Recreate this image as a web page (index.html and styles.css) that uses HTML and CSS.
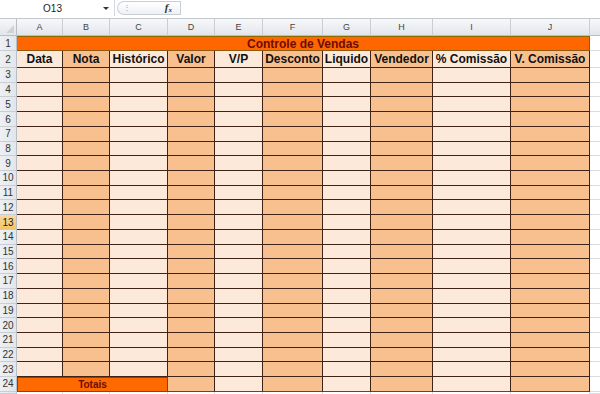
FILE: index.html
```html
<!DOCTYPE html>
<html>
<head>
<meta charset="utf-8">
<link rel="stylesheet" href="styles.css">
</head>
<body>
<div class="fbar">
  <div class="namebox"><span class="ref">O13</span><span class="arrow"></span></div>
  <div class="pill"><span class="dots">⋮</span><span class="fx"><i>f</i><sub>x</sub></span></div>
  <div class="input"></div>
</div>
<div class="sheet">
  <div class="corner"><span class="tri"></span></div>
  <div class="ch">A</div><div class="ch">B</div><div class="ch">C</div><div class="ch">D</div><div class="ch">E</div><div class="ch">F</div><div class="ch">G</div><div class="ch">H</div><div class="ch">I</div><div class="ch">J</div><div class="ch last"></div>

  <div class="rh">1</div><div class="title">Controle de Vendas</div><div class="x"></div>

  <div class="rh r2">2</div>
  <div class="c l hd">Data</div><div class="c d hd">Nota</div><div class="c l hd">Histórico</div><div class="c d hd">Valor</div><div class="c l hd">V/P</div><div class="c d hd">Desconto</div><div class="c l hd">Liquido</div><div class="c d hd">Vendedor</div><div class="c l hd">% Comissão</div><div class="c d hd">V. Comissão</div><div class="x"></div>

  <div class="rh">3</div><div class="c l"></div><div class="c d"></div><div class="c l"></div><div class="c d"></div><div class="c l"></div><div class="c d"></div><div class="c l"></div><div class="c d"></div><div class="c l"></div><div class="c d"></div><div class="x"></div>
  <div class="rh">4</div><div class="c l"></div><div class="c d"></div><div class="c l"></div><div class="c d"></div><div class="c l"></div><div class="c d"></div><div class="c l"></div><div class="c d"></div><div class="c l"></div><div class="c d"></div><div class="x"></div>
  <div class="rh">5</div><div class="c l"></div><div class="c d"></div><div class="c l"></div><div class="c d"></div><div class="c l"></div><div class="c d"></div><div class="c l"></div><div class="c d"></div><div class="c l"></div><div class="c d"></div><div class="x"></div>
  <div class="rh">6</div><div class="c l"></div><div class="c d"></div><div class="c l"></div><div class="c d"></div><div class="c l"></div><div class="c d"></div><div class="c l"></div><div class="c d"></div><div class="c l"></div><div class="c d"></div><div class="x"></div>
  <div class="rh">7</div><div class="c l"></div><div class="c d"></div><div class="c l"></div><div class="c d"></div><div class="c l"></div><div class="c d"></div><div class="c l"></div><div class="c d"></div><div class="c l"></div><div class="c d"></div><div class="x"></div>
  <div class="rh">8</div><div class="c l"></div><div class="c d"></div><div class="c l"></div><div class="c d"></div><div class="c l"></div><div class="c d"></div><div class="c l"></div><div class="c d"></div><div class="c l"></div><div class="c d"></div><div class="x"></div>
  <div class="rh">9</div><div class="c l"></div><div class="c d"></div><div class="c l"></div><div class="c d"></div><div class="c l"></div><div class="c d"></div><div class="c l"></div><div class="c d"></div><div class="c l"></div><div class="c d"></div><div class="x"></div>
  <div class="rh">10</div><div class="c l"></div><div class="c d"></div><div class="c l"></div><div class="c d"></div><div class="c l"></div><div class="c d"></div><div class="c l"></div><div class="c d"></div><div class="c l"></div><div class="c d"></div><div class="x"></div>
  <div class="rh">11</div><div class="c l"></div><div class="c d"></div><div class="c l"></div><div class="c d"></div><div class="c l"></div><div class="c d"></div><div class="c l"></div><div class="c d"></div><div class="c l"></div><div class="c d"></div><div class="x"></div>
  <div class="rh">12</div><div class="c l"></div><div class="c d"></div><div class="c l"></div><div class="c d"></div><div class="c l"></div><div class="c d"></div><div class="c l"></div><div class="c d"></div><div class="c l"></div><div class="c d"></div><div class="x"></div>
  <div class="rh act">13</div><div class="c l"></div><div class="c d"></div><div class="c l"></div><div class="c d"></div><div class="c l"></div><div class="c d"></div><div class="c l"></div><div class="c d"></div><div class="c l"></div><div class="c d"></div><div class="x"></div>
  <div class="rh">14</div><div class="c l"></div><div class="c d"></div><div class="c l"></div><div class="c d"></div><div class="c l"></div><div class="c d"></div><div class="c l"></div><div class="c d"></div><div class="c l"></div><div class="c d"></div><div class="x"></div>
  <div class="rh">15</div><div class="c l"></div><div class="c d"></div><div class="c l"></div><div class="c d"></div><div class="c l"></div><div class="c d"></div><div class="c l"></div><div class="c d"></div><div class="c l"></div><div class="c d"></div><div class="x"></div>
  <div class="rh">16</div><div class="c l"></div><div class="c d"></div><div class="c l"></div><div class="c d"></div><div class="c l"></div><div class="c d"></div><div class="c l"></div><div class="c d"></div><div class="c l"></div><div class="c d"></div><div class="x"></div>
  <div class="rh">17</div><div class="c l"></div><div class="c d"></div><div class="c l"></div><div class="c d"></div><div class="c l"></div><div class="c d"></div><div class="c l"></div><div class="c d"></div><div class="c l"></div><div class="c d"></div><div class="x"></div>
  <div class="rh">18</div><div class="c l"></div><div class="c d"></div><div class="c l"></div><div class="c d"></div><div class="c l"></div><div class="c d"></div><div class="c l"></div><div class="c d"></div><div class="c l"></div><div class="c d"></div><div class="x"></div>
  <div class="rh">19</div><div class="c l"></div><div class="c d"></div><div class="c l"></div><div class="c d"></div><div class="c l"></div><div class="c d"></div><div class="c l"></div><div class="c d"></div><div class="c l"></div><div class="c d"></div><div class="x"></div>
  <div class="rh">20</div><div class="c l"></div><div class="c d"></div><div class="c l"></div><div class="c d"></div><div class="c l"></div><div class="c d"></div><div class="c l"></div><div class="c d"></div><div class="c l"></div><div class="c d"></div><div class="x"></div>
  <div class="rh">21</div><div class="c l"></div><div class="c d"></div><div class="c l"></div><div class="c d"></div><div class="c l"></div><div class="c d"></div><div class="c l"></div><div class="c d"></div><div class="c l"></div><div class="c d"></div><div class="x"></div>
  <div class="rh">22</div><div class="c l"></div><div class="c d"></div><div class="c l"></div><div class="c d"></div><div class="c l"></div><div class="c d"></div><div class="c l"></div><div class="c d"></div><div class="c l"></div><div class="c d"></div><div class="x"></div>
  <div class="rh">23</div><div class="c l"></div><div class="c d"></div><div class="c l"></div><div class="c d"></div><div class="c l"></div><div class="c d"></div><div class="c l"></div><div class="c d"></div><div class="c l"></div><div class="c d"></div><div class="x"></div>
  <div class="rh">24</div><div class="totais">Totais</div><div class="c d tb"></div><div class="c l tb"></div><div class="c d tb"></div><div class="c l tb"></div><div class="c d tb"></div><div class="c l tb"></div><div class="c d tb"></div><div class="x"></div>

  <div class="rh"></div><div class="e"></div><div class="e"></div><div class="e"></div><div class="e"></div><div class="e"></div><div class="e"></div><div class="e"></div><div class="e"></div><div class="e"></div><div class="e"></div><div class="x"></div>
</div>
</body>
</html>
```
FILE: styles.css
```css
* { box-sizing: border-box; }
html, body {
  margin: 0;
  padding: 0;
  width: 600px;
  height: 394px;
  overflow: hidden;
  background: #ffffff;
  font-family: "Liberation Sans", Arial, sans-serif;
}

/* formula bar */
.fbar {
  display: flex;
  height: 19px;
  padding-bottom: 2px;
  border-bottom: 1px solid #c3c8cf;
  background: #ffffff;
}
.namebox {
  width: 115px;
  display: flex;
  align-items: center;
  border-right: 1px solid #d4d8de;
}
.ref {
  flex: 1;
  text-align: center;
  font-size: 10px;
  color: #222;
  padding-left: 2px;
}
.arrow {
  width: 0;
  height: 0;
  border-left: 3px solid transparent;
  border-right: 3px solid transparent;
  border-top: 3px solid #333;
  margin-right: 5px;
}
.pill {
  width: 63px;
  margin: 1px 0 1px 2px;
  border: 1px solid #c9ced6;
  border-right: none;
  border-radius: 8px 0 0 8px;
  background: linear-gradient(#ffffff, #eef1f5);
  display: flex;
  align-items: center;
  justify-content: space-between;
  padding: 0 8px 0 5px;
}
.dots {
  font-size: 8px;
  color: #9aa2ad;
  line-height: 1;
}
.fx {
  font-family: "Liberation Serif", serif;
  font-size: 11px;
  font-weight: bold;
  color: #333;
  line-height: 1;
}
.fx sub { font-size: 7px; font-style: italic; vertical-align: -1px; }
.input {
  flex: 1;
  border-left: 1px solid #c9ced6;
  margin: 1px 0;
}

/* sheet */
.sheet {
  display: grid;
  grid-template-columns: 17px 46px 47px 58px 47px 48px 60px 48px 62px 78px 79px 10px;
  grid-template-rows: 17px 15px 17px repeat(22, 14.73px) 1fr;
  height: 375px;
}
.corner {
  background: linear-gradient(#f6f7f9, #e3e6ea);
  border-right: 1px solid #b9bec6;
  border-bottom: 1px solid #b9bec6;
  position: relative;
}
.tri {
  position: absolute;
  right: 2px;
  bottom: 2px;
  width: 0;
  height: 0;
  border-left: 8px solid transparent;
  border-bottom: 8px solid #cfd3d9;
}
.ch {
  background: linear-gradient(#f7f8fa, #e2e6eb);
  border-right: 1px solid #c9ced5;
  border-bottom: 1px solid #b9bec6;
  font-size: 9px;
  color: #444;
  display: flex;
  align-items: center;
  justify-content: center;
}
.rh {
  background: linear-gradient(90deg, #eef0f3, #e2e6eb);
  border-right: 1px solid #b9bec6;
  border-bottom: 1px solid #c9ced5;
  font-size: 10px;
  color: #333;
  display: flex;
  align-items: center;
  justify-content: center;
}
.rh.act {
  background: linear-gradient(#f9d99a, #f2c468);
  color: #222;
}
.title {
  grid-column: 2 / 12;
  background: #ff6600;
  border-top: 1px solid #8f6a00;
  border-bottom: 1px solid #8f5a10;
  border-right: 1px solid #8f5a10;
  color: #6e0c00;
  font-weight: bold;
  font-size: 12px;
  display: flex;
  align-items: center;
  justify-content: center;
}
.c {
  border-right: 1px solid #3f2317;
  border-bottom: 1px solid #3f2317;
}
.l { background: #fde9d9; }
.d { background: #f9c08f; }
.hd {
  font-weight: bold;
  font-size: 12px;
  color: #111;
  display: flex;
  align-items: center;
  justify-content: center;
  white-space: nowrap;
  overflow: hidden;
}
.totais {
  grid-column: 2 / 5;
  background: #ff6a00;
  border: 1px solid #e01a00;
  color: #6e0c00;
  font-weight: bold;
  font-size: 10px;
  display: flex;
  align-items: center;
  justify-content: center;
}
.tb { border-bottom-color: #a32a1a; }
.x {
  border-bottom: 1px solid #dadcdf;
  background: #ffffff;
}
.ch.last { border-right: none; }
.e {
  border-right: 1px solid #dadcdf;
  background: #ffffff;
}
```
